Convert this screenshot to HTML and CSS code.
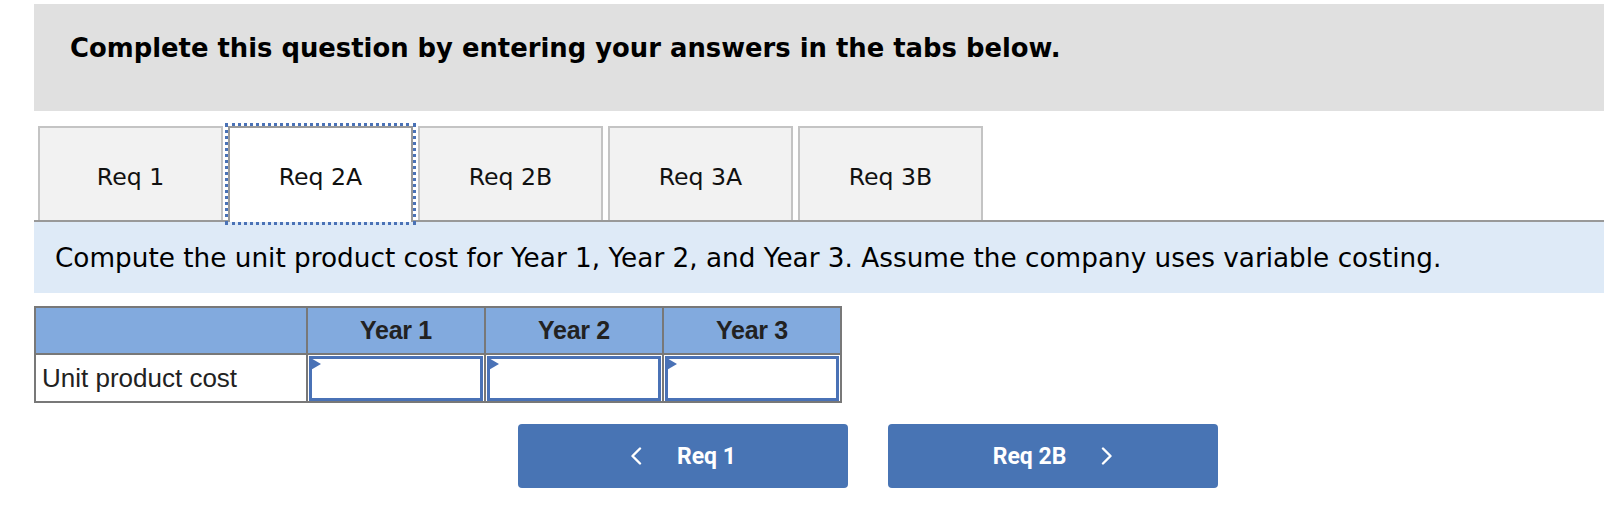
FILE: index.html
```html
<!DOCTYPE html>
<html lang="en">
<head>
<meta charset="utf-8">
<title>Req 2A</title>
<link rel="stylesheet" href="styles.css">
</head>
<body>
<div class="page">
  <div class="qhead">
    <h2 class="qtitle">Complete this question by entering your answers in the tabs below.</h2>
  </div>

  <div class="tabs">
    <div class="tab">Req 1</div>
    <div class="tab active">Req 2A</div>
    <div class="tab">Req 2B</div>
    <div class="tab">Req 3A</div>
    <div class="tab">Req 3B</div>
  </div>

  <div class="prompt">Compute the unit product cost for Year 1, Year 2, and Year 3. Assume the company uses variable costing.</div>

  <table class="grid">
    <colgroup>
      <col class="c-label">
      <col class="c-year">
      <col class="c-year">
      <col class="c-year">
    </colgroup>
    <thead>
      <tr>
        <th></th>
        <th>Year 1</th>
        <th>Year 2</th>
        <th>Year 3</th>
      </tr>
    </thead>
    <tbody>
      <tr>
        <td class="label">Unit product cost</td>
        <td class="entry"><div class="box"><span class="flag"></span></div></td>
        <td class="entry"><div class="box"><span class="flag"></span></div></td>
        <td class="entry"><div class="box"><span class="flag"></span></div></td>
      </tr>
    </tbody>
  </table>

  <div class="nav">
    <button class="navbtn" type="button">
      <svg class="chev" width="12" height="18" viewBox="0 0 12 18"><polyline points="10,1.5 2.5,9 10,16.5" fill="none" stroke="#fff" stroke-width="2.4" stroke-linecap="round" stroke-linejoin="round"/></svg>
      <span>Req 1</span>
    </button>
    <button class="navbtn" type="button">
      <span>Req 2B</span>
      <svg class="chev" width="12" height="18" viewBox="0 0 12 18"><polyline points="2,1.5 9.5,9 2,16.5" fill="none" stroke="#fff" stroke-width="2.4" stroke-linecap="round" stroke-linejoin="round"/></svg>
    </button>
  </div>
</div>
</body>
</html>
```

FILE: styles.css
```css
* { box-sizing: border-box; }

html, body {
  margin: 0;
  padding: 0;
  background: #ffffff;
}

.page {
  width: 1616px;
  padding: 4px 12px 0 34px;
}

.qhead {
  height: 107px;
  background: #e0e0e0;
  padding: 29px 0 0 36px;
}

.qtitle {
  margin: 0;
  font-family: "DejaVu Sans", Verdana, sans-serif;
  font-weight: bold;
  font-size: 25.85px;
  line-height: 30px;
  color: #000;
}

.tabs {
  display: flex;
  gap: 5px;
  margin-top: 15px;
  padding-left: 4px;
  border-bottom: 2px solid #999999;
}

.tab {
  width: 185px;
  height: 94px;
  border: 2px solid #c4c4c4;
  border-bottom: none;
  background: #f2f2f2;
  display: flex;
  align-items: center;
  justify-content: center;
  padding-top: 5px;
  font-family: "DejaVu Sans", Verdana, sans-serif;
  font-size: 23.6px;
  color: #111;
}

.tab.active {
  background: #ffffff;
  border-color: #9a9a9a;
  height: 96px;
  margin-bottom: -2px;
  padding-bottom: 2px;
  outline: 3px dotted #4a72b6;
  outline-offset: 0;
  position: relative;
}

.prompt {
  height: 71px;
  background: #deeaf7;
  padding-left: 21px;
  display: flex;
  align-items: center;
  font-family: "DejaVu Sans", Verdana, sans-serif;
  font-size: 26.3px;
  color: #000;
}

.grid {
  margin-top: 13px;
  border-collapse: collapse;
  table-layout: fixed;
  width: 807px;
  font-family: "Liberation Sans", Arial, sans-serif;
  color: #222;
}

.c-label { width: 272px; }
.c-year { width: 178px; }

.grid th,
.grid td {
  border: 2px solid #787878;
  padding: 0;
}

.grid th {
  height: 47px;
  background: #82aade;
  font-size: 25px;
  font-weight: bold;
  text-align: center;
  letter-spacing: -0.3px;
}

.grid td {
  height: 48px;
  background: #ffffff;
}

.grid td.label {
  font-size: 26px;
  padding-left: 6px;
}

.grid td.entry {
  padding: 1px 1px 0 1px;
}

.box {
  position: relative;
  height: 45px;
  border: 3px solid #4a72b6;
  background: #fff;
}

.flag {
  position: absolute;
  left: -3px;
  top: -2px;
  width: 0;
  height: 0;
  border-left: 12px solid #4a72b6;
  border-top: 7px solid transparent;
  border-bottom: 7px solid transparent;
}

.nav {
  display: flex;
  gap: 40px;
  margin-top: 21px;
  padding-left: 484px;
}

.navbtn {
  width: 330px;
  height: 64px;
  border: none;
  border-radius: 4px;
  background: #4874b4;
  color: #ffffff;
  display: flex;
  align-items: center;
  justify-content: center;
  gap: 35px;
  font-family: Roboto, "Liberation Sans", sans-serif;
  font-weight: bold;
  font-size: 23px;
  padding: 0;
}

.chev { display: block; }
```
